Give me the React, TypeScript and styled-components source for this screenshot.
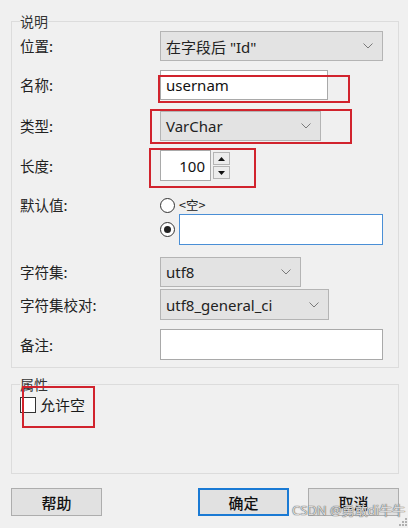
import styled, { createGlobalStyle } from 'styled-components'

const GlobalStyle = createGlobalStyle`
  html, body {
    margin: 0;
    padding: 0;
    background: #f0f0f0;
  }
  body {
    font-family: "Noto Sans", "Noto Sans CJK SC", sans-serif;
    font-size: 15px;
    color: #1a1a1a;
  }
`

const Page = styled.div`
  position: relative;
  width: 408px;
  height: 528px;
  box-sizing: border-box;
  padding: 12px 9px 0 11px;
  overflow: hidden;
`

const Group = styled.fieldset<{ $height?: number; $top?: number }>`
  margin: ${(p) => p.$top ?? 0}px 0 0 0;
  padding: 0 15px 7px 8px;
  border: 1px solid #dcdcdc;
  min-width: 0;
  box-sizing: border-box;
  ${(p) => (p.$height ? `height: ${p.$height}px;` : '')}
`

const Legend = styled.legend`
  padding: 0;
  margin: 0;
  font-family: "Noto Sans CJK SC", sans-serif;
  font-size: 14px;
  line-height: 18px;
  color: #333;
`

const Row = styled.div<{ $top: number; $align?: string }>`
  display: grid;
  grid-template-columns: 140px 1fr;
  align-items: ${(p) => p.$align ?? 'center'};
  margin-top: ${(p) => p.$top}px;
`

const Label = styled.div`
  font-family: "Noto Sans CJK SC", sans-serif;
  font-size: 14.5px;
  line-height: 18px;
  color: #222;
`

const Field = styled.div<{ $width?: number }>`
  position: relative;
  width: ${(p) => (p.$width ? `${p.$width}px` : '100%')};
`

const Select = styled.div<{ $height?: number }>`
  display: flex;
  align-items: center;
  justify-content: space-between;
  box-sizing: border-box;
  height: ${(p) => p.$height ?? 30}px;
  padding: 0 9px 0 5px;
  background: #e3e3e3;
  border: 1px solid #b4b4b4;
  font-size: 15px;
  color: #222;
`

const TextBox = styled.div<{ $height?: number; $focus?: boolean; $align?: string }>`
  box-sizing: border-box;
  height: ${(p) => p.$height ?? 30}px;
  padding: 0 5px;
  display: flex;
  align-items: center;
  justify-content: ${(p) => p.$align ?? 'flex-start'};
  background: #fff;
  border: 1px solid ${(p) => (p.$focus ? '#4a8fd6' : '#a9a9a9')};
  font-size: 15px;
  color: #111;
`

const Mark = styled.div<{ $l: number; $t: number; $r: number; $b: number }>`
  position: absolute;
  left: ${(p) => p.$l}px;
  top: ${(p) => p.$t}px;
  right: ${(p) => p.$r}px;
  bottom: ${(p) => p.$b}px;
  border: 2px solid #d1232d;
  pointer-events: none;
`

const SpinWrap = styled.div`
  display: flex;
  align-items: center;
  gap: 2px;
`

const SpinButtons = styled.div`
  display: flex;
  flex-direction: column;
  gap: 1px;
`

const SpinButton = styled.div`
  width: 17px;
  height: 13px;
  box-sizing: border-box;
  border: 1px solid #b4b4b4;
  background: #ececec;
  display: flex;
  align-items: center;
  justify-content: center;
`

const RadioLine = styled.div<{ $height: number }>`
  display: flex;
  align-items: center;
  gap: 4px;
  height: ${(p) => p.$height}px;
`

const Radio = styled.span<{ $checked?: boolean }>`
  width: 15px;
  height: 15px;
  box-sizing: border-box;
  border-radius: 50%;
  border: 1px solid #333;
  background: #fff;
  display: flex;
  align-items: center;
  justify-content: center;
  flex: none;
  &::after {
    content: '';
    width: 7px;
    height: 7px;
    border-radius: 50%;
    background: ${(p) => (p.$checked ? '#222' : 'transparent')};
  }
`

const RadioText = styled.span`
  font-family: "Noto Sans CJK SC", sans-serif;
  font-size: 12.5px;
  line-height: 16px;
  color: #222;
`

const CheckRow = styled.div`
  position: relative;
  display: flex;
  align-items: center;
  gap: 4px;
  margin-top: 3px;
  width: 66px;
  white-space: nowrap;
`

const Box = styled.span`
  width: 16px;
  height: 16px;
  box-sizing: border-box;
  border: 1px solid #333;
  background: #fff;
  flex: none;
`

const CheckText = styled.span`
  font-family: "Noto Sans CJK SC", sans-serif;
  font-size: 15px;
  line-height: 18px;
`

const Buttons = styled.div`
  display: flex;
  justify-content: space-between;
  margin-top: 14px;
`

const ButtonGroup = styled.div`
  display: flex;
  gap: 19px;
`

const Button = styled.div<{ $default?: boolean }>`
  width: 91px;
  height: 28px;
  box-sizing: border-box;
  display: flex;
  align-items: center;
  justify-content: center;
  background: #e1e1e1;
  border: ${(p) => (p.$default ? '2px solid #1a7ad4' : '1px solid #adadad')};
  font-family: "Noto Sans CJK SC", sans-serif;
  font-size: 15px;
  font-weight: 500;
  color: #111;
`

const Watermark = styled.div`
  position: absolute;
  left: 292px;
  top: 502px;
  font-family: "Noto Sans", "Noto Sans CJK SC", sans-serif;
  font-size: 13px;
  line-height: 16px;
  color: rgba(235, 235, 235, 0.9);
  text-shadow: 0 0 1px #555, 0 0 1px #555;
  pointer-events: none;
`

const Grip = styled.svg`
  position: absolute;
  right: 0;
  bottom: 1px;
`

const Chevron = () => (
  <svg width="10" height="6" viewBox="0 0 10 6">
    <polyline points="0.5,0.5 5,5 9.5,0.5" fill="none" stroke="#7a7a7a" strokeWidth="1" />
  </svg>
)

const Arrow = ({ up }: { up?: boolean }) => (
  <svg width="7" height="4" viewBox="0 0 7 4">
    <polygon points={up ? '3.5,0 7,4 0,4' : '0,0 7,0 3.5,4'} fill="#111" />
  </svg>
)

export default function App() {
  return (
    <>
      <GlobalStyle />
      <Page>
        <Group>
          <Legend>说明</Legend>
          <Row $top={1}>
            <Label>位置:</Label>
            <Field>
              <Select>
                在字段后 "Id"
                <Chevron />
              </Select>
            </Field>
          </Row>
          <Row $top={9}>
            <Label>名称:</Label>
            <Field $width={168}>
              <TextBox>usernam</TextBox>
              <Mark $l={-2} $t={5} $r={-22} $b={-3} />
            </Field>
          </Row>
          <Row $top={11}>
            <Label>类型:</Label>
            <Field $width={161}>
              <Select>
                VarChar
                <Chevron />
              </Select>
              <Mark $l={-10} $t={-2} $r={-31} $b={-3} />
            </Field>
          </Row>
          <Row $top={9}>
            <Label>长度:</Label>
            <Field $width={70}>
              <SpinWrap>
                <TextBox $height={31} $align="flex-end" style={{ width: 51 }}>
                  100
                </TextBox>
                <SpinButtons>
                  <SpinButton>
                    <Arrow up />
                  </SpinButton>
                  <SpinButton>
                    <Arrow />
                  </SpinButton>
                </SpinButtons>
              </SpinWrap>
              <Mark $l={-11} $t={-2} $r={-26} $b={-7} />
            </Field>
          </Row>
          <Row $top={15} $align="start">
            <Label>默认值:</Label>
            <div>
              <RadioLine $height={18}>
                <Radio />
                <RadioText>&lt;空&gt;</RadioText>
              </RadioLine>
              <RadioLine $height={31}>
                <Radio $checked />
                <Field>
                  <TextBox $height={31} $focus />
                </Field>
              </RadioLine>
            </div>
          </Row>
          <Row $top={12}>
            <Label>字符集:</Label>
            <Field $width={141}>
              <Select>
                utf8
                <Chevron />
              </Select>
            </Field>
          </Row>
          <Row $top={2}>
            <Label>字符集校对:</Label>
            <Field $width={169}>
              <Select $height={31}>
                utf8_general_ci
                <Chevron />
              </Select>
            </Field>
          </Row>
          <Row $top={9}>
            <Label>备注:</Label>
            <Field>
              <TextBox $height={31} />
            </Field>
          </Row>
        </Group>
        <Group $top={7} $height={99}>
          <Legend>属性</Legend>
          <CheckRow>
            <Box />
            <CheckText>允许空</CheckText>
            <Mark $l={2} $t={-10} $r={-9} $b={-14} />
          </CheckRow>
        </Group>
        <Buttons>
          <Button>帮助</Button>
          <ButtonGroup>
            <Button $default>确定</Button>
            <Button>取消</Button>
          </ButtonGroup>
        </Buttons>
        <Watermark>CSDN @勇敢di牛牛</Watermark>
        <Grip width="10" height="10" viewBox="0 0 10 10">
          <g fill="#b0b0b0">
            <rect x="7" y="1" width="2" height="2" />
            <rect x="4" y="4" width="2" height="2" />
            <rect x="7" y="4" width="2" height="2" />
            <rect x="1" y="7" width="2" height="2" />
            <rect x="4" y="7" width="2" height="2" />
            <rect x="7" y="7" width="2" height="2" />
          </g>
        </Grip>
      </Page>
    </>
  )
}
